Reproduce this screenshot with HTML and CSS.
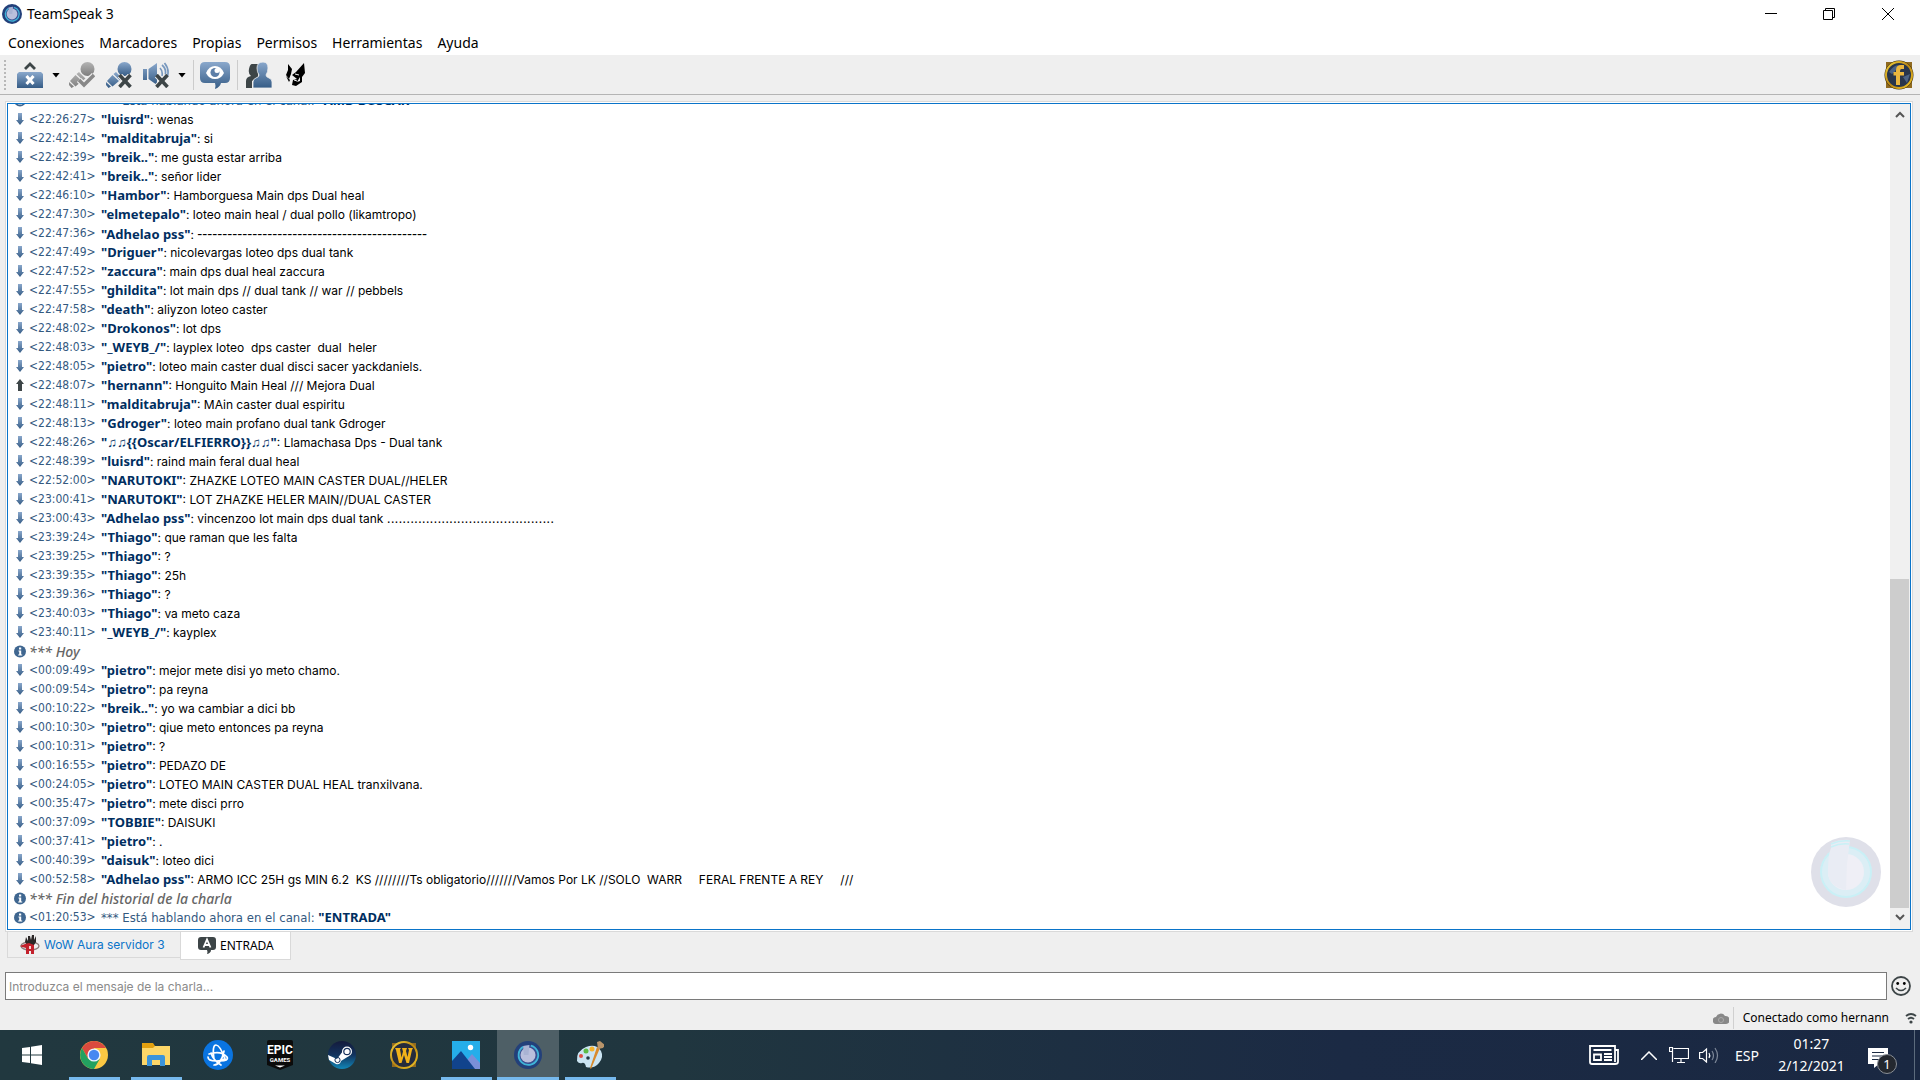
FILE: index.html
```html
<!DOCTYPE html>
<html lang="es">
<head>
<meta charset="utf-8">
<title>TeamSpeak 3</title>
<link rel="stylesheet" href="styles.css">
</head>
<body>
<svg class="defs" aria-hidden="true">
  <defs>
    <linearGradient id="blue" x1="0" y1="0" x2="0" y2="1"><stop offset="0" stop-color="#8aa8cc"/><stop offset="1" stop-color="#355c86"/></linearGradient>
    <linearGradient id="grey" x1="0" y1="0" x2="0" y2="1"><stop offset="0" stop-color="#b4b4b4"/><stop offset="1" stop-color="#7e7e7e"/></linearGradient>
    <linearGradient id="steam" x1="0" y1="0" x2="0" y2="1"><stop offset="0" stop-color="#141b3c"/><stop offset=".5" stop-color="#12335e"/><stop offset="1" stop-color="#1287b8"/></linearGradient>
    <linearGradient id="gold" x1="0" y1="0" x2="1" y2="1"><stop offset="0" stop-color="#f6d33c"/><stop offset=".5" stop-color="#b98612"/><stop offset="1" stop-color="#f2c526"/></linearGradient>
    <symbol id="in" viewBox="0 0 8 13"><path d="M2 0h4v7h2l-4 5-4-5h2z" fill="url(#blue)"/></symbol>
    <symbol id="out" viewBox="0 0 8 13"><path d="M2 12h4V5h2L4 0 0 5h2z" fill="#3d4547"/></symbol>
    <symbol id="info" viewBox="0 0 12 12"><circle cx="6" cy="6" r="6" fill="#3f6690"/><path d="M4.500 5h2.700v4h1v1H4.200V9h1V6h-.7zM5 2h2.200v2H5z" fill="#fff"/></symbol>
    <symbol id="orb" viewBox="0 0 20 20"><circle cx="10" cy="10" r="10" fill="#23407a"/><circle cx="10" cy="10" r="7.200" fill="#3a4f92"/><circle cx="10" cy="10" r="5.400" fill="#b9bfdc"/><path d="M6.500 4.200A7 7 0 1 0 12 3.300" fill="none" stroke="#3fb4d8" stroke-width="1.300"/><path d="M6.500 3.500 11 2.800 10.300 10H7z" fill="#a9b3d3"/></symbol>
    <symbol id="mic" viewBox="0 0 26 26"><circle cx="18.500" cy="7" r="7"/><path d="m10 10 6.500 6.500-2.500 2L7.500 12zM6.500 13l6.500 6-6.500 5.500L1 19zM0 20l5 4.500-2.500 1.500L0 23z"/></symbol>
    <symbol id="cross" viewBox="0 0 14 14"><path d="m2 1.500 10 11M12 1.500l-10 11" stroke="#efefef" stroke-width="5.500"/><path d="m1.500 1 11 12M12.500 1l-11 12" stroke="#3d4547" stroke-width="3.600"/></symbol>
  </defs>
</svg>

<header class="titlebar">
  <svg class="app-icon"><use href="#orb"/></svg>
  <h1>TeamSpeak 3</h1>
  <div class="window-buttons">
    <button aria-label="Minimizar"><svg viewBox="0 0 12 12"><path d="M0 5.500h12"/></svg></button>
    <button aria-label="Restaurar"><svg viewBox="0 0 12 12"><path d="M.5 2.500h9v9h-9zM2.500 2.500v-2h9v9h-2"/></svg></button>
    <button aria-label="Cerrar"><svg viewBox="0 0 12 12"><path d="m0 0 12 12M12 0 0 12"/></svg></button>
  </div>
</header>

<nav class="menubar">
  <button>Conexiones</button><button>Marcadores</button><button>Propias</button><button>Permisos</button><button>Herramientas</button><button>Ayuda</button>
</nav>

<div class="toolbar">
  <span class="grip"></span>
  <button class="tool" aria-label="Canal"><svg viewBox="0 0 26 26"><path d="m8 7 5-5 5 5" fill="none" stroke="#3d4547" stroke-width="2.800"/><path d="M2 10h22l2 2v14H0V12z" fill="url(#blue)"/><path d="m9.500 14 7 8M16.500 14l-7 8" stroke="#fff" stroke-width="3"/></svg></button>
  <button class="arrow" aria-label="Más opciones de canal"></button>
  <button class="tool" aria-label="Activar micrófono"><svg viewBox="0 0 26 26"><use href="#mic" fill="url(#grey)"/><path d="m10 18 5 5 10-10" fill="none" stroke="#efefef" stroke-width="6"/><path d="m10 18 5 5 10-10" fill="none" stroke="#888" stroke-width="3.500"/></svg></button>
  <button class="tool" aria-label="Silenciar micrófono"><svg viewBox="0 0 26 26"><use href="#mic" fill="url(#blue)"/><use href="#cross" x="12" y="12" width="14" height="14"/></svg></button>
  <button class="tool tight" aria-label="Silenciar altavoces"><svg viewBox="0 0 26 26"><path d="M0 7h4v11H0zM5.500 7 14 1v22l-8.500-6z" fill="url(#blue)"/><path d="M17 6q3 3 2 8M19 3q5 4 3 11M21.500 1q5 6 3 13" fill="none" stroke="#7898be" stroke-width="1.700"/><use href="#cross" x="12" y="12" width="14" height="14"/></svg></button>
  <button class="arrow" aria-label="Más opciones de sonido"></button>
  <span class="sep"></span>
  <button class="tool wide" aria-label="Suscribirse"><svg viewBox="0 0 30 27"><path d="M5 0h20q5 0 5 5v11q0 5-5 5h-4q-1 4-6 6 1-3 0-6H5q-5 0-5-5V5q0-5 5-5z" fill="url(#blue)"/><path d="M6 11q3-7 9-7t9 7q-3 6-9 6t-9-6z" fill="#fff"/><circle cx="15" cy="10.500" r="4.500" fill="#5d7fa8"/><circle cx="17" cy="8.500" r="2.500" fill="#fff"/></svg></button>
  <span class="sep"></span>
  <button class="tool" aria-label="Contactos"><svg viewBox="0 0 26 26"><path d="M6 2h6v13l-6 4v7H0v-7q0-4 5-5-3-2-2-7 1-5 3-5z" fill="#3d4547"/><path d="M17 0q5 0 5 6 0 4-2 7 0 2 3 3 3 1 3 4v6H7v-6q0-3 3-4t3-3q-2-3-2-7 0-6 6-6z" fill="url(#blue)" stroke="#efefef" stroke-width=".8"/></svg></button>
  <button class="tool" aria-label="Lobo"><svg viewBox="0 0 26 26"><path d="m5 2 4 5-1 5-2 5-3-4 2-5zM21 1l1 10-3 4v5l-6 4-4-1 1-5 4-1-5-4 4-3zM17 15l-3 5 3-1z"/><path d="m3 14 4 4-1 2z"/><path d="m12 12 4 1M11 18l3 1" stroke="#efefef"/></svg></button>
  <button class="tool badge-f" aria-label="Facebook"><svg viewBox="0 0 30 30"><path d="M2 2h26v26H2z" fill="#8f6a22"/><circle cx="15" cy="15" r="14.500" fill="#3b2c0c"/><circle cx="15" cy="15" r="13" fill="#28354b" stroke="url(#gold)" stroke-width="2"/><path d="M5 12q4-6 9-7-3 8-6 9zM19 17l7-3-3 9z" fill="#4b6285"/><path d="M20 5v4h-2.500q-1.500 0-1.500 2v1h4v3.500h-4V25h-4V15.500h-2.500V12H12v-2q0-5 5-5z" fill="#eab63e"/></svg></button>
</div>

<main class="chat">
  <section class="log-frame">
    <div class="log">
    <ul>
      <li><svg><use href="#info"/></svg><time>&lt;22:26:05&gt;</time><p class="sys">*** Está hablando ahora en el canal: <b>"AMD BUSCAR"</b></p></li>
      <li><svg><use href="#in"/></svg><time>&lt;22:26:27&gt;</time><p><b>"luisrd"</b>: wenas</p></li>
      <li><svg><use href="#in"/></svg><time>&lt;22:42:14&gt;</time><p><b>"malditabruja"</b>: si</p></li>
      <li><svg><use href="#in"/></svg><time>&lt;22:42:39&gt;</time><p><b>"breik.."</b>: me gusta estar arriba</p></li>
      <li><svg><use href="#in"/></svg><time>&lt;22:42:41&gt;</time><p><b>"breik.."</b>: señor lider</p></li>
      <li><svg><use href="#in"/></svg><time>&lt;22:46:10&gt;</time><p><b>"Hambor"</b>: Hamborguesa Main dps Dual heal</p></li>
      <li><svg><use href="#in"/></svg><time>&lt;22:47:30&gt;</time><p><b>"elmetepalo"</b>: loteo main heal / dual pollo (likamtropo)</p></li>
      <li><svg><use href="#in"/></svg><time>&lt;22:47:36&gt;</time><p><b>"Adhelao pss"</b>: <span class="dashes">----------------------------------------------</span></p></li>
      <li><svg><use href="#in"/></svg><time>&lt;22:47:49&gt;</time><p><b>"Driguer"</b>: nicolevargas loteo dps dual tank</p></li>
      <li><svg><use href="#in"/></svg><time>&lt;22:47:52&gt;</time><p><b>"zaccura"</b>: main dps dual heal zaccura</p></li>
      <li><svg><use href="#in"/></svg><time>&lt;22:47:55&gt;</time><p><b>"ghildita"</b>: lot main dps // dual tank // war // pebbels</p></li>
      <li><svg><use href="#in"/></svg><time>&lt;22:47:58&gt;</time><p><b>"death"</b>: aliyzon loteo caster</p></li>
      <li><svg><use href="#in"/></svg><time>&lt;22:48:02&gt;</time><p><b>"Drokonos"</b>: lot dps</p></li>
      <li><svg><use href="#in"/></svg><time>&lt;22:48:03&gt;</time><p><b>"_WEYB_/"</b>: layplex loteo  dps caster  dual  heler</p></li>
      <li><svg><use href="#in"/></svg><time>&lt;22:48:05&gt;</time><p><b>"pietro"</b>: loteo main caster dual disci sacer yackdaniels.</p></li>
      <li><svg><use href="#out"/></svg><time>&lt;22:48:07&gt;</time><p><b>"hernann"</b>: Honguito Main Heal /// Mejora Dual</p></li>
      <li><svg><use href="#in"/></svg><time>&lt;22:48:11&gt;</time><p><b>"malditabruja"</b>: MAin caster dual espiritu</p></li>
      <li><svg><use href="#in"/></svg><time>&lt;22:48:13&gt;</time><p><b>"Gdroger"</b>: loteo main profano dual tank Gdroger</p></li>
      <li><svg><use href="#in"/></svg><time>&lt;22:48:26&gt;</time><p><b>"♫♫{{Oscar/ELFIERRO}}♫♫"</b>: Llamachasa Dps - Dual tank</p></li>
      <li><svg><use href="#in"/></svg><time>&lt;22:48:39&gt;</time><p><b>"luisrd"</b>: raind main feral dual heal</p></li>
      <li><svg><use href="#in"/></svg><time>&lt;22:52:00&gt;</time><p><b>"NARUTOKI"</b>: ZHAZKE LOTEO MAIN CASTER DUAL//HELER</p></li>
      <li><svg><use href="#in"/></svg><time>&lt;23:00:41&gt;</time><p><b>"NARUTOKI"</b>: LOT ZHAZKE HELER MAIN//DUAL CASTER</p></li>
      <li><svg><use href="#in"/></svg><time>&lt;23:00:43&gt;</time><p><b>"Adhelao pss"</b>: vincenzoo lot main dps dual tank <span class="dots">...........................................</span></p></li>
      <li><svg><use href="#in"/></svg><time>&lt;23:39:24&gt;</time><p><b>"Thiago"</b>: que raman que les falta</p></li>
      <li><svg><use href="#in"/></svg><time>&lt;23:39:25&gt;</time><p><b>"Thiago"</b>: ?</p></li>
      <li><svg><use href="#in"/></svg><time>&lt;23:39:35&gt;</time><p><b>"Thiago"</b>: 25h</p></li>
      <li><svg><use href="#in"/></svg><time>&lt;23:39:36&gt;</time><p><b>"Thiago"</b>: ?</p></li>
      <li><svg><use href="#in"/></svg><time>&lt;23:40:03&gt;</time><p><b>"Thiago"</b>: va meto caza</p></li>
      <li><svg><use href="#in"/></svg><time>&lt;23:40:11&gt;</time><p><b>"_WEYB_/"</b>: kayplex</p></li>
      <li><svg><use href="#info"/></svg><p class="mark">*** Hoy</p></li>
      <li><svg><use href="#in"/></svg><time>&lt;00:09:49&gt;</time><p><b>"pietro"</b>: mejor mete disi yo meto chamo.</p></li>
      <li><svg><use href="#in"/></svg><time>&lt;00:09:54&gt;</time><p><b>"pietro"</b>: pa reyna</p></li>
      <li><svg><use href="#in"/></svg><time>&lt;00:10:22&gt;</time><p><b>"breik.."</b>: yo wa cambiar a dici bb</p></li>
      <li><svg><use href="#in"/></svg><time>&lt;00:10:30&gt;</time><p><b>"pietro"</b>: qiue meto entonces pa reyna</p></li>
      <li><svg><use href="#in"/></svg><time>&lt;00:10:31&gt;</time><p><b>"pietro"</b>: ?</p></li>
      <li><svg><use href="#in"/></svg><time>&lt;00:16:55&gt;</time><p><b>"pietro"</b>: PEDAZO DE</p></li>
      <li><svg><use href="#in"/></svg><time>&lt;00:24:05&gt;</time><p><b>"pietro"</b>: LOTEO MAIN CASTER DUAL HEAL tranxilvana.</p></li>
      <li><svg><use href="#in"/></svg><time>&lt;00:35:47&gt;</time><p><b>"pietro"</b>: mete disci prro</p></li>
      <li><svg><use href="#in"/></svg><time>&lt;00:37:09&gt;</time><p><b>"TOBBIE"</b>: DAISUKI</p></li>
      <li><svg><use href="#in"/></svg><time>&lt;00:37:41&gt;</time><p><b>"pietro"</b>: .</p></li>
      <li><svg><use href="#in"/></svg><time>&lt;00:40:39&gt;</time><p><b>"daisuk"</b>: loteo dici</p></li>
      <li><svg><use href="#in"/></svg><time>&lt;00:52:58&gt;</time><p><b>"Adhelao pss"</b>: ARMO ICC 25H gs MIN 6.2  KS ////////Ts obligatorio///////Vamos Por LK //SOLO  WARR     FERAL FRENTE A REY     ///</p></li>
      <li><svg><use href="#info"/></svg><p class="mark">*** Fin del historial de la charla</p></li>
      <li><svg><use href="#info"/></svg><time>&lt;01:20:53&gt;</time><p class="sys">*** Está hablando ahora en el canal: <b>"ENTRADA"</b></p></li>
    </ul>
    <svg class="watermark" viewBox="0 0 70 70"><circle cx="35" cy="35" r="35" fill="#dfe0e9"/><circle cx="35" cy="35" r="26" fill="#c9f0f6"/><circle cx="35" cy="35" r="24" fill="#dbeef5"/><circle cx="35" cy="35" r="18" fill="#efeff6"/><path d="M20 6q9-4 19-3l-3 24-1 26q-18-4-18-18 0-18 3-24z" fill="#e9ecf4"/><path d="M20 7q9-4 19-3M20 10q9-4 18-3" fill="none" stroke="#c9f0f6" stroke-width="1.500"/></svg>
    <div class="scrollbar">
      <svg viewBox="0 0 10 7"><path d="m1 6 4-4 4 4"/></svg>
      <div class="track"><div class="thumb"></div></div>
      <svg viewBox="0 0 10 7"><path d="m1 1 4 4 4-4"/></svg>
    </div>
    </div>
  </section>
  <div class="tabs">
    <button class="tab server"><svg viewBox="0 0 20 20"><ellipse cx="10" cy="11" rx="9" ry="4" fill="none" stroke="#8a7a7a" stroke-width="1.300"/><path d="m5 7 1-5 2 4V1h2l1 4 1-5h2v5l2-4v6l-2 3H7z" fill="#2b2727"/><path d="m0 11 5-2 4-1 5 2v9h-3v-3H9v3H6v-6l-4-1z" fill="#c3202c"/><path d="M9 11h2v3H9z" fill="#f3d5d5"/></svg>WoW Aura servidor 3</button><button class="tab active"><svg viewBox="0 0 18 17"><path d="M3 0h12q3 0 3 3v7q0 3-3 3h-2q0 3-4 4 1-2 0-4H3q-3 0-3-3V3q0-3 3-3z" fill="#3d4547"/><path d="m5.500 10.500 3.500-8 3.500 8M7 8h4" fill="none" stroke="#fff" stroke-width="1.800"/></svg>ENTRADA</button>
  </div>
  <div class="compose">
    <input type="text" aria-label="Mensaje" placeholder="Introduzca el mensaje de la charla...">
    <button aria-label="Emoticonos"><svg viewBox="0 0 20 20"><circle cx="10" cy="10" r="9" fill="none" stroke="#3d4547" stroke-width="1.800"/><circle cx="6.700" cy="7.500" r="1.400"/><circle cx="13.300" cy="7.500" r="1.400"/><path d="M5 12q5 5 10 0" fill="none" stroke="#3d4547" stroke-width="1.600"/></svg></button>
  </div>
</main>

<footer class="status">
  <svg class="cloud" viewBox="0 0 16 11"><path d="M3.500 11a3.500 3.500 0 0 1-.5-7A5 5 0 0 1 12 3a4 4 0 0 1 1 8z" fill="#888"/><circle cx="8" cy="7" r="2.500" fill="none" stroke="#aaa"/></svg>
  <span class="state">Conectado como hernann</span>
  <svg class="signal" viewBox="0 0 12 11"><path d="M1 3q5-4 10 0M3 6q3-2.500 6 0" fill="none" stroke="#3d4547" stroke-width="1.900"/><circle cx="6" cy="9" r="1.600" fill="#3d4547"/></svg>
</footer>

<div class="taskbar">
  <button class="app" aria-label="Inicio"><svg class="start" viewBox="0 0 20 20"><path d="M0 3l8-1v7.500H0zM9 1.800 20 0v9.500H9zM0 10.500h8V18l-8-1zM9 10.500h11V20L9 18.200z" fill="#fff"/></svg></button>
  <button class="app open" aria-label="Chrome"><svg viewBox="0 0 28 28"><circle cx="14" cy="14" r="14" fill="#fbc843"/><path d="M14 14 1.900 7A14 14 0 0 1 26.100 7H14z" fill="#db4a3e"/><path d="M2 7 8 17.500 14 14V7z" fill="#db4a3e"/><path d="M8 17.500 14 20l6-2.500L14 28h-1A14 14 0 0 1 2 7z" fill="#23a160"/><circle cx="14" cy="14" r="6.600" fill="#eef4fd"/><circle cx="14" cy="14" r="5.200" fill="#4688f1"/></svg></button>
  <button class="app open" aria-label="Explorador"><svg viewBox="0 0 28 28"><path d="M0 2h11l2 3v5H0z" fill="#e3a10f"/><path d="M0 7h11l2-2h15v19H0z" fill="#fdd768"/><path d="M5 25V16q0-2 2-2h14q2 0 2 2v9h-5v-6h-8v6z" fill="#3c94da"/></svg></button>
  <button class="app" aria-label="Battle.net"><svg class="big" viewBox="0 0 30 30"><circle cx="15" cy="15" r="15" fill="#0a74e0"/><path d="M11 19Q9 5 13 5q4 0 9 14M6 14q12-4 18 3 2 4-7 4M11 25q7 0 10-14M8 13q2 7 10 12M5 17q0 4 8 4 6 0 9-3" fill="none" stroke="#fff" stroke-width="1.700" stroke-linecap="round"/></svg></button>
  <button class="app" aria-label="Epic Games"><svg class="big" viewBox="0 0 30 30"><path d="M4 0h22q2 0 2 2v23l-13 5-13-5V2q0-2 2-2z" fill="#0b0b0b"/><text x="15" y="14" class="epic">EPIC</text><text x="15" y="22" class="games">GAMES</text><path d="M10 25.500h10l-5 2z" fill="#fff"/></svg></button>
  <button class="app" aria-label="Steam"><svg viewBox="0 0 28 28"><circle cx="14" cy="14" r="14" fill="url(#steam)"/><path d="m0 14 9 4 6-8 6 5-8 5q-1 4-5 3l-7-4z" fill="#fff"/><circle cx="19" cy="10.500" r="5" fill="#fff"/><circle cx="19" cy="10.500" r="3.200" fill="#fff" stroke="#17305c" stroke-width="1.200"/><circle cx="9.500" cy="19" r="2.600" fill="none" stroke="#17305c"/></svg></button>
  <button class="app" aria-label="World of Warcraft"><svg viewBox="0 0 28 28"><path d="M2 2h24v24H2z" fill="#8f6a22"/><circle cx="14" cy="14" r="13" fill="#262c3c" stroke="url(#gold)" stroke-width="2"/><path d="M5 7h6l-1 1.500 1.500 8 1.500-6-1-3.500h5l-1 3 1.500 6 1.500-7-1-2h5l-1 2-3 13h-2.500L14 14l-2.500 8H9L6 9z" fill="#f0b21a"/></svg></button>
  <button class="app open" aria-label="Fotos"><svg viewBox="0 0 28 28"><path d="M0 0h28v28H0z" fill="#25aeea"/><path d="m8 28 12-15 8 9v6z" fill="#7a8fd8"/><path d="M0 20 9 10l14 18H0z" fill="#11438c"/><circle cx="18.500" cy="6.500" r="2.700" fill="#fff"/></svg></button>
  <button class="app open current" aria-label="TeamSpeak 3"><svg viewBox="0 0 28 28"><use href="#orb"/></svg></button>
  <button class="app open" aria-label="Paint"><svg viewBox="0 0 28 28"><path d="M1 20Q0 10 10 6t15 4q3 6-2 12t-13 4q-1-5-4-4t-5-2z" fill="#cbe4f2"/><circle cx="5" cy="15" r="2" fill="#e04f43"/><circle cx="10" cy="10" r="2.500" fill="#5dbb46"/><circle cx="16" cy="8" r="2.500" fill="#f6b32c"/><circle cx="12" cy="17" r="1.800" fill="#243a44"/><path d="m15 28-1-1 7-21 3 1z" fill="#d98a2b"/><path d="m21 1 3-1 5 4-2 3-5 1z" fill="#b8946a"/></svg></button>
  <div class="tray">
    <button aria-label="Noticias"><svg class="news" viewBox="0 0 30 20"><g fill="none" stroke="#fff" stroke-width="1.800"><path d="M26 5V1H1v16q0 2 2 2h23q3 0 3-2V5h-3v12M4.500 5h18M5 9.500h7V15H5zM15 9h8M15 12h8M15 15h8"/></g></svg></button>
    <button aria-label="Iconos ocultos"><svg class="up" viewBox="0 0 16 9"><path d="m0 9 8-8 8 8" fill="none" stroke="#fff" stroke-width="1.500"/></svg></button>
    <button aria-label="Red"><svg class="net" viewBox="0 0 20 16"><path d="M4.500 1.500h15v10H5M12 11.500v4M8 15.500h8M3.500 5v10M.5.5h3v4h-3z" fill="none" stroke="#fff" stroke-width="1.200"/></svg></button>
    <button aria-label="Volumen"><svg class="vol" viewBox="0 0 21 16"><path d="M.6 5.500h3L7.500 2v13l-3.900-3.500h-3z" fill="none" stroke="#fff" stroke-width="1.200"/><path d="M10 6q1.500 2.500 0 5" fill="none" stroke="#fff" stroke-width="1.200"/><path d="M13 4q3 4.500 0 9M16 1q5 7.500 0 15" fill="none" stroke="#7c8798" stroke-width="1.200"/></svg></button>
    <button class="lang">ESP</button>
    <button class="clock"><span>01:27</span><span>2/12/2021</span></button>
    <button class="notes" aria-label="Notificaciones"><svg viewBox="0 0 20 20"><path d="M0 0h20v16H11l-5 4v-4H0z" fill="#fff"/><path d="M4 4.500h12M4 8h12M4 11.500h8" stroke="#1b2a42" stroke-width="1.200"/></svg><span class="count">1</span></button>
  </div>
</div>
</body>
</html>
```
FILE: styles.css
```css
* { box-sizing: border-box; }
body {
  margin: 0;
  height: 100vh;
  display: flex;
  flex-direction: column;
  background: #efefef;
  color: #000;
  font: 12px/19px "Noto Sans", "Open Sans", sans-serif;
  overflow: hidden;
}
button {
  border: 0;
  padding: 0;
  background: none;
  font: inherit;
  color: inherit;
}
svg { display: block; flex: none; }
.defs { position: absolute; width: 0; height: 0; }

.titlebar {
  display: flex;
  align-items: center;
  height: 28px;
  padding-left: 2px;
  background: #fff;
}
.app-icon { width: 20px; height: 20px; }
h1 { margin: 0 0 0 5px; font-size: 14px; font-weight: 400; line-height: 20px; }
.window-buttons { display: flex; margin-left: auto; }
.window-buttons button {
  display: grid;
  place-items: center;
  width: 58px;
  height: 28px;
}
.window-buttons svg { width: 12px; height: 12px; fill: none; stroke: #000; }
.window-buttons button:last-child { width: 62px; padding-right: 2px; }

.menubar {
  display: flex;
  gap: 15px;
  height: 28px;
  padding: 1px 8px 0;
  background: #fff;
  border-bottom: 1px solid #efefef;
  font-size: 14px;
  line-height: 28px;
}

.toolbar {
  display: flex;
  align-items: center;
  height: 39px;
  padding: 0 6px 0 4px;
  border-bottom: 1px solid #b4b4b4;
}
.grip { width: 3px; height: 30px; margin-right: 10px; border-left: 2px dotted #b8b8b8; }
.tool { margin-right: 11px; }
.tool svg { width: 26px; height: 26px; }
.tool:nth-of-type(1), .tool.tight { margin-right: 9px; }
.tool.wide { margin-right: 7px; }
.tool.wide svg { width: 30px; height: 27px; }
.tool.badge-f { margin: 0 0 0 auto; }
.tool.badge-f svg { width: 30px; height: 30px; }
.arrow {
  width: 8px;
  height: 5px;
  margin-right: 9px;
  background: #000;
  clip-path: polygon(0 0, 100% 0, 50% 100%);
}
.sep { width: 1px; height: 30px; margin-right: 8px; background: #ccc; }
.arrow + .sep { margin: 0 6px 0 -2px; }

.chat {
  flex: 1;
  min-height: 0;
  display: flex;
  flex-direction: column;
  padding: 6px 7px 0 5px;
}
.log-frame {
  flex: 1;
  min-height: 0;
  display: flex;
  padding: 1px;
  border: 1px solid #d9d9d9;
  background: #fff;
}
.log {
  position: relative;
  flex: 1;
  min-width: 0;
  display: flex;
  border: 1px solid #0a74c9;
  background: #fff;
}
ul {
  flex: 1;
  min-width: 0;
  display: flex;
  flex-direction: column;
  justify-content: flex-end;
  margin: 0;
  padding: 0 0 2px;
  list-style: none;
  overflow: hidden;
}
li {
  display: flex;
  flex: none;
  height: 19px;
  align-items: center;
  white-space: pre;
  font-family: Inter, "Noto Sans", sans-serif;
}
li svg { width: 12px; height: 13px; margin: 0 3px 0 6px; }
li p { margin: 0; }
time {
  width: 72px;
  color: #34597f;
  font-family: "DejaVu Sans Condensed", "DejaVu Sans", sans-serif;
}
li b { color: #002e5f; font-family: "Noto Sans", sans-serif; font-size: 13px; }
.sys { color: #34597f; font-family: "DejaVu Sans Condensed", "DejaVu Sans", sans-serif; font-size: 13px; }
.mark { color: #666; font-family: "Noto Sans", sans-serif; font-size: 14px; font-weight: 500; font-style: italic; }
.dashes { font-family: "Liberation Sans", sans-serif; font-size: 15px; }
.dots { font-family: "Liberation Sans", sans-serif; font-size: 14px; }

.watermark { position: absolute; right: 29px; bottom: 22px; width: 70px; height: 70px; }

.scrollbar {
  width: 20px;
  display: flex;
  flex-direction: column;
  align-items: center;
  justify-content: space-between;
  padding: 7px 1px 8px 0;
  background: #f0f0f0;
}
.scrollbar svg { width: 10px; height: 7px; fill: none; stroke: #555; stroke-width: 2; }
.track { flex: 1; width: 19px; margin: 6px 0; display: flex; flex-direction: column; justify-content: flex-end; }
.thumb { height: 42%; background: #cdcdcd; }

.tabs { display: flex; align-items: flex-start; height: 40px; padding-left: 2px; line-height: 24px; }
.tab { display: flex; align-items: center; height: 26px; border: 1px solid #d9d9d9; border-top: 0; }
.server { width: 173px; padding-left: 12px; gap: 4px; color: #0a74c9; font-family: Inter, sans-serif; border-right: 0; }
.server svg { width: 20px; height: 20px; }
.active { height: 28px; width: 111px; padding-left: 17px; gap: 4px; background: #fff; }
.active svg { width: 18px; height: 17px; }

.compose { display: flex; align-items: center; gap: 4px; }
.compose input {
  flex: 1;
  height: 28px;
  padding: 0 3px;
  border: 1px solid #7a7a7a;
  background: #fff;
  font-family: Inter, sans-serif;
  font-size: 12px;
}
.compose input::placeholder { color: #8a8a8a; opacity: 1; }
.compose svg { width: 20px; height: 20px; }
.compose button { margin-right: 2px; }

.status { display: flex; align-items: center; height: 30px; padding: 6px 3px 0 0; }
.status .cloud { width: 16px; height: 11px; margin: 0 4px 0 auto; }
.state { padding: 0 16px 0 9px; border-left: 1px solid #d0d0d0; line-height: 22px; }
.signal { width: 12px; height: 11px; }

.taskbar {
  display: flex;
  height: 50px;
  padding-left: 1px;
  background: linear-gradient(90deg, #21383f 0%, #20363f 35%, #1b2a44 70%, #1a2842 100%);
  color: #fff;
}
.app { display: grid; place-items: center; width: 62px; height: 50px; position: relative; }
.app svg { width: 28px; height: 28px; }
.app svg.start { width: 20px; height: 20px; }
.app svg.big { width: 30px; height: 30px; }
.open::after {
  content: "";
  position: absolute;
  left: 6px;
  right: 5px;
  bottom: 0;
  height: 3px;
  background: #76b9ed;
}
.current { background: #4e5f66; }
.current::after { left: 0; right: 0; }
.epic { font: bold 12px Roboto, sans-serif; fill: #fff; text-anchor: middle; }
.games { font: bold 6px Roboto, sans-serif; fill: #fff; text-anchor: middle; }

.tray { display: flex; align-items: center; margin-left: auto; padding-right: 5px; font-size: 14px; }
.news { width: 30px; height: 20px; margin-right: 22px; }
.up { width: 16px; height: 9px; margin-right: 12px; }
.net { width: 20px; height: 16px; margin-right: 10px; }
.vol { width: 21px; height: 16px; margin-right: 14px; }
.lang { width: 26px; }
.clock { display: flex; flex-direction: column; align-items: center; width: 103px; line-height: 22px; }
.notes { position: relative; width: 52px; height: 50px; padding: 5px 0 0 5px; border-right: 1px solid #5c6b7c; }
.notes svg { width: 20px; height: 20px; }
.count {
  position: absolute;
  left: 14px;
  top: 24px;
  width: 20px;
  height: 20px;
  border: 1px solid #8a8f96;
  border-radius: 50%;
  background: #24282f;
  font-size: 13px;
  line-height: 18px;
}
```
